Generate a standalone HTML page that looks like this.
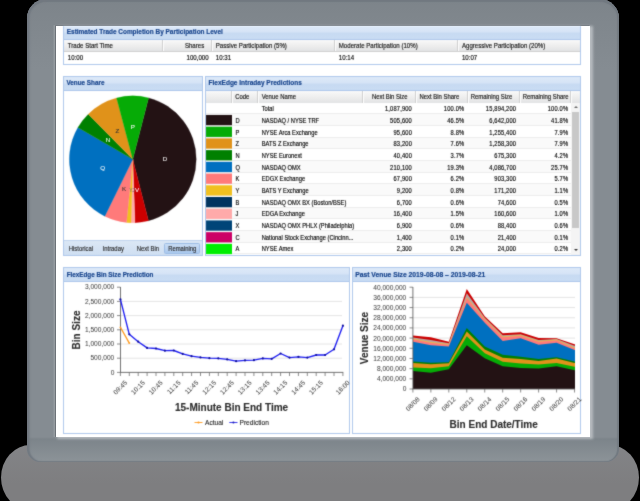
<!DOCTYPE html>
<html><head><meta charset="utf-8">
<style>
html,body{margin:0;padding:0;background:#000;}
body{width:640px;height:501px;overflow:hidden;position:relative;font-family:"Liberation Sans",sans-serif;}
#base{position:absolute;left:1px;top:444.6px;width:637.8px;height:65px;border-radius:29.5px/32.5px;background:linear-gradient(#838487,#7e7e80 60%);}
#mon{position:absolute;left:27.3px;top:-1px;width:591.6px;height:462.7px;border-radius:19.5px 19.5px 13.5px 13.5px;background:linear-gradient(#7d848a 0,#80878d 24px,#858c92 70px,#858c92 438px,#7c848a 440px,#8b9297 461px);box-shadow:inset 2.5px 0 1.6px 0 #717880,inset -1.8px 0 1px 0 #727980,inset 0 3.1px 1px 0 #727980,inset 0 -0.9px 1px 0 #798086;}
#scr{position:absolute;left:55.5px;top:26.4px;width:534.4px;height:410.5px;background:#fff;box-shadow:-0.9px -0.4px 0 0.3px #6c7278,-2px -0.4px 0.6px 0.3px #a0a6aa,1.8px 0.6px 2.4px 1.1px #b6bbbf;}
#ui{position:absolute;left:0;top:0;width:640px;height:501px;filter:url(#soft);}
.p{position:absolute;border:1px solid #b0c9ec;background:#fff;box-sizing:border-box;}
.h{position:absolute;left:0;right:0;top:0;height:13px;background:linear-gradient(#dde9f8 0,#d6e4f6 42%,#c7daf2 58%,#c9dcf3 100%);border-bottom:0.8px solid #adc7eb;box-sizing:border-box;}
.h b{position:absolute;left:4.4px;top:2.4px;font-size:6.35px;line-height:8px;color:#15428b;white-space:nowrap;letter-spacing:0;-webkit-text-stroke:0.15px #15428b}
.gh{position:absolute;left:0;right:0;height:12.6px;background:linear-gradient(#f9f9f9,#ececec 60%,#e2e3e5);border-bottom:0.8px solid #d0d0d0;box-sizing:border-box;}
.gh span{position:absolute;top:2.6px;font-size:5.95px;line-height:8px;color:#111;white-space:nowrap;-webkit-text-stroke:0.14px #222;transform:scaleY(1.16);transform-origin:50% 55%}
.gh i{position:absolute;top:0;bottom:0;width:0.8px;background:#cfcfcf;border-right:0.6px solid #fff}
.t{position:absolute;font-size:6.1px;line-height:8px;color:#000;white-space:nowrap;-webkit-text-stroke:0.14px #111;transform:scaleY(1.16);transform-origin:50% 55%}
.row{position:absolute;left:205.8px;width:365.2px;height:11.72px;border-bottom:0.6px solid #ededed;box-sizing:border-box;}
.row .sw{position:absolute;left:0.4px;top:1px;width:26px;height:9.9px;}
.row span{position:absolute;top:2.6px;font-size:5.75px;line-height:8px;color:#000;white-space:nowrap;-webkit-text-stroke:0.14px #111;transform:scaleY(1.16);transform-origin:50% 55%}
.row .n{text-align:right;letter-spacing:0.16px}
svg{position:absolute;left:0;top:0;}
svg text{font-family:"Liberation Sans",sans-serif;}
.ax{font-size:6.6px;fill:#484848;stroke:#484848;stroke-width:0.05px}
.ttl{font-size:10px;font-weight:bold;fill:#2c2c2c;stroke:#2c2c2c;stroke-width:0.12px}
.lg{font-size:6.6px;fill:#222;stroke:#222;stroke-width:0.1px}
.pl{font-size:6.2px;fill:#fff;stroke:#fff;stroke-width:0.08px}
.tb{position:absolute;font-size:5.9px;line-height:8px;color:#222;white-space:nowrap;-webkit-text-stroke:0.12px #333;transform:scaleY(1.16);transform-origin:50% 55%}
</style></head><body>
<svg width="0" height="0" style="position:absolute"><filter id="soft" x="0" y="0" width="100%" height="100%" color-interpolation-filters="sRGB"><feConvolveMatrix order="3" kernelMatrix="0.025 0.085 0.025 0.085 0.56 0.085 0.025 0.085 0.025" divisor="1" edgeMode="duplicate" preserveAlpha="false"/></filter></svg>
<div id="base"></div>
<div id="mon"></div>
<div id="scr"></div>
<div id="ui">
<!-- panel 1 -->
<div class="p" style="left:63.2px;top:26.4px;width:517.8px;height:38.8px;border-top:none">
 <div class="h" style="height:13.6px"><b style="left:2.6px;top:2.1px;font-size:6.45px">Estimated Trade Completion By Participation Level</b></div>
 <div class="gh" style="top:13.6px;height:11.6px">
  <span style="left:3.6px;top:1.8px;font-size:6.1px">Trade Start Time</span><i style="left:97.9px"></i>
  <span style="right:375.8px;top:1.8px;font-size:6.1px">Shares</span><i style="left:147px"></i>
  <span style="left:151.6px;top:1.8px;font-size:6.1px">Passive Participation (5%)</span><i style="left:269.6px"></i>
  <span style="left:274.6px;top:1.8px;font-size:6.1px">Moderate Participation (10%)</span><i style="left:392.6px"></i>
  <span style="left:397.8px;top:1.8px;font-size:6.1px">Aggressive Participation (20%)</span>
 </div>
 <span class="t" style="left:3.6px;top:27.6px">10:00</span>
 <span class="t" style="right:371.4px;top:27.6px">100,000</span>
 <span class="t" style="left:151.6px;top:27.6px">10:31</span>
 <span class="t" style="left:274.6px;top:27.6px">10:14</span>
 <span class="t" style="left:397.8px;top:27.6px">10:07</span>
</div>
<!-- venue share -->
<div class="p" style="left:63.2px;top:75.6px;width:139.4px;height:180px">
 <div class="h" style="height:14px"><b style="left:2.2px;top:2.9px">Venue Share</b></div>
 <div style="position:absolute;left:0;right:0;bottom:0;height:13.8px;background:linear-gradient(#dbe7f5,#cfdff2);border-top:0.6px solid #c0d4ee"></div>
 <div style="position:absolute;left:100.2px;top:166.2px;width:36px;height:11.4px;box-sizing:border-box;border:0.8px solid #9cbce5;border-radius:1.5px;background:linear-gradient(#c8dcf4 0,#bdd4f1 50%,#a8c8ee 100%)"></div>
 <span class="tb" style="left:4.6px;top:168.2px">Historical</span>
 <span class="tb" style="left:38.4px;top:168.2px">Intraday</span>
 <span class="tb" style="left:72.6px;top:168.2px">Next Bin</span>
 <span class="tb" style="left:104px;top:168.2px">Remaining</span>
</div>
<!-- flexedge intraday -->
<div class="p" style="left:205.4px;top:75.6px;width:375.6px;height:180px">
 <div class="h" style="height:14px"><b style="left:2.2px;top:2.9px;font-size:6.5px">FlexEdge Intraday Predictions</b></div>
 <div class="gh" style="top:14px;height:13px">
  <i style="left:24.9px"></i><span style="left:28.8px;top:2.5px">Code</span><i style="left:51px"></i>
  <span style="left:55.3px;top:2.5px">Venue Name</span><i style="left:155.8px"></i>
  <span style="left:165.5px;top:2.5px">Next Bin Size</span><i style="left:208.4px"></i>
  <span style="left:213px;top:2.5px">Next Bin Share</span><i style="left:260.8px"></i>
  <span style="left:264.3px;top:2.5px">Remaining Size</span><i style="left:312.4px"></i>
  <span style="left:316.3px;top:2.5px">Remaining Share</span><i style="left:363.8px"></i>
 </div>
</div>
<div style="position:absolute;left:205.8px;top:102.6px;width:374.2px;height:152px;overflow:hidden">
 <div style="position:absolute;left:-205.8px;top:-102.6px;width:640px;height:501px">
<div class="row" style="top:102.6px;background:#ffffff">
<span class="c" style="left:29.6px"></span><span class="c" style="left:55.9px">Total</span><span class="n" style="right:159px">1,087,900</span><span class="n" style="right:106.7px">100.0%</span><span class="n" style="right:54.8px">15,894,200</span><span class="n" style="right:2.8px">100.0%</span></div>
<div class="row" style="top:114.27px;background:#fafafa">
<span class="c" style="left:29.6px">D</span><span class="c" style="left:55.9px">NASDAQ / NYSE TRF</span><span class="n" style="right:159px">505,600</span><span class="n" style="right:106.7px">46.5%</span><span class="n" style="right:54.8px">6,642,000</span><span class="n" style="right:2.8px">41.8%</span></div>
<div class="row" style="top:125.94px;background:#ffffff">
<span class="c" style="left:29.6px">P</span><span class="c" style="left:55.9px">NYSE Arca Exchange</span><span class="n" style="right:159px">95,600</span><span class="n" style="right:106.7px">8.8%</span><span class="n" style="right:54.8px">1,255,400</span><span class="n" style="right:2.8px">7.9%</span></div>
<div class="row" style="top:137.61px;background:#fafafa">
<span class="c" style="left:29.6px">Z</span><span class="c" style="left:55.9px">BATS Z Exchange</span><span class="n" style="right:159px">83,200</span><span class="n" style="right:106.7px">7.6%</span><span class="n" style="right:54.8px">1,258,300</span><span class="n" style="right:2.8px">7.9%</span></div>
<div class="row" style="top:149.28px;background:#ffffff">
<span class="c" style="left:29.6px">N</span><span class="c" style="left:55.9px">NYSE Euronext</span><span class="n" style="right:159px">40,400</span><span class="n" style="right:106.7px">3.7%</span><span class="n" style="right:54.8px">675,300</span><span class="n" style="right:2.8px">4.2%</span></div>
<div class="row" style="top:160.95px;background:#fafafa">
<span class="c" style="left:29.6px">Q</span><span class="c" style="left:55.9px">NASDAQ OMX</span><span class="n" style="right:159px">210,100</span><span class="n" style="right:106.7px">19.3%</span><span class="n" style="right:54.8px">4,086,700</span><span class="n" style="right:2.8px">25.7%</span></div>
<div class="row" style="top:172.62px;background:#ffffff">
<span class="c" style="left:29.6px">K</span><span class="c" style="left:55.9px">EDGX Exchange</span><span class="n" style="right:159px">67,900</span><span class="n" style="right:106.7px">6.2%</span><span class="n" style="right:54.8px">903,300</span><span class="n" style="right:2.8px">5.7%</span></div>
<div class="row" style="top:184.29px;background:#fafafa">
<span class="c" style="left:29.6px">Y</span><span class="c" style="left:55.9px">BATS Y Exchange</span><span class="n" style="right:159px">9,200</span><span class="n" style="right:106.7px">0.8%</span><span class="n" style="right:54.8px">171,200</span><span class="n" style="right:2.8px">1.1%</span></div>
<div class="row" style="top:195.96px;background:#ffffff">
<span class="c" style="left:29.6px">B</span><span class="c" style="left:55.9px">NASDAQ OMX BX (Boston/BSE)</span><span class="n" style="right:159px">6,700</span><span class="n" style="right:106.7px">0.6%</span><span class="n" style="right:54.8px">74,600</span><span class="n" style="right:2.8px">0.5%</span></div>
<div class="row" style="top:207.63px;background:#fafafa">
<span class="c" style="left:29.6px">J</span><span class="c" style="left:55.9px">EDGA Exchange</span><span class="n" style="right:159px">16,400</span><span class="n" style="right:106.7px">1.5%</span><span class="n" style="right:54.8px">160,600</span><span class="n" style="right:2.8px">1.0%</span></div>
<div class="row" style="top:219.3px;background:#ffffff">
<span class="c" style="left:29.6px">X</span><span class="c" style="left:55.9px">NASDAQ OMX PHLX (Philadelphia)</span><span class="n" style="right:159px">6,900</span><span class="n" style="right:106.7px">0.6%</span><span class="n" style="right:54.8px">88,400</span><span class="n" style="right:2.8px">0.6%</span></div>
<div class="row" style="top:230.97px;background:#fafafa">
<span class="c" style="left:29.6px">C</span><span class="c" style="left:55.9px">National Stock Exchange (Cincinn...</span><span class="n" style="right:159px">1,400</span><span class="n" style="right:106.7px">0.1%</span><span class="n" style="right:54.8px">21,400</span><span class="n" style="right:2.8px">0.1%</span></div>
<div class="row" style="top:242.64px;background:#ffffff">
<span class="c" style="left:29.6px">A</span><span class="c" style="left:55.9px">NYSE Amex</span><span class="n" style="right:159px">2,300</span><span class="n" style="right:106.7px">0.2%</span><span class="n" style="right:54.8px">24,000</span><span class="n" style="right:2.8px">0.2%</span></div>
 </div>
 <!-- scrollbar -->
 <div style="position:absolute;left:365.2px;top:0;width:9px;height:152.6px;background:#f4f4f4"></div>
 <div style="position:absolute;left:366.2px;top:9.8px;width:7.4px;height:115.8px;background:#c8c8c8"></div>
 <div style="position:absolute;left:367.8px;top:3.6px;width:0;height:0;border-left:2px solid transparent;border-right:2px solid transparent;border-bottom:2.4px solid #666"></div>
 <div style="position:absolute;left:367.8px;top:146.2px;width:0;height:0;border-left:2px solid transparent;border-right:2px solid transparent;border-top:2.4px solid #333"></div>
</div>
<!-- bottom panels -->
<div class="p" style="left:63.2px;top:267.3px;width:286.4px;height:167.2px">
 <div class="h" style="height:13.7px"><b style="left:2.5px;top:2.8px;font-size:6.3px">FlexEdge Bin Size Prediction</b></div>
</div>
<div class="p" style="left:352.4px;top:267.3px;width:228.6px;height:167.2px">
 <div class="h" style="height:13.7px"><b style="left:1.8px;top:2.8px;font-size:6.78px">Past Venue Size 2019-08-08 – 2019-08-21</b></div>
</div>
<svg width="640" height="501" viewBox="0 0 640 501">
<path d="M132.8 159.3L148.57 97.89A63.4 63.4 0 0 1 148.46 220.74Z" fill="#231214" stroke="#231214" stroke-width="0.3"/>
<path d="M132.8 159.3L148.46 220.74A63.4 63.4 0 0 1 135.01 222.66Z" fill="#cc0000" stroke="#cc0000" stroke-width="0.3"/>
<path d="M132.8 159.3L135.01 222.66A63.4 63.4 0 0 1 131.03 222.68Z" fill="#ffaaaa" stroke="#ffaaaa" stroke-width="0.3"/>
<path d="M132.8 159.3L131.03 222.68A63.4 63.4 0 0 1 126.5 222.39Z" fill="#f0c020" stroke="#f0c020" stroke-width="0.3"/>
<path d="M132.8 159.3L126.5 222.39A63.4 63.4 0 0 1 104.81 216.19Z" fill="#ff7a7a" stroke="#ff7a7a" stroke-width="0.3"/>
<path d="M132.8 159.3L104.81 216.19A63.4 63.4 0 0 1 77.95 127.5Z" fill="#0070c0" stroke="#0070c0" stroke-width="0.3"/>
<path d="M132.8 159.3L77.95 127.5A63.4 63.4 0 0 1 88.28 114.16Z" fill="#008000" stroke="#008000" stroke-width="0.3"/>
<path d="M132.8 159.3L88.28 114.16A63.4 63.4 0 0 1 116.6 98Z" fill="#e0921a" stroke="#e0921a" stroke-width="0.3"/>
<path d="M132.8 159.3L116.6 98A63.4 63.4 0 0 1 148.57 97.89Z" fill="#06ab06" stroke="#06ab06" stroke-width="0.3"/>
<rect x="206.05" y="114.95" width="25.95" height="10.25" fill="#231214"/>
<rect x="206.05" y="126.67" width="25.95" height="10.25" fill="#06ab06"/>
<rect x="206.05" y="138.39" width="25.95" height="10.25" fill="#e0921a"/>
<rect x="206.05" y="150.11" width="25.95" height="10.25" fill="#008000"/>
<rect x="206.05" y="161.83" width="25.95" height="10.25" fill="#0070c0"/>
<rect x="206.05" y="173.55" width="25.95" height="10.25" fill="#ff7a7a"/>
<rect x="206.05" y="185.27" width="25.95" height="10.25" fill="#f0c020"/>
<rect x="206.05" y="196.99" width="25.95" height="10.25" fill="#003460"/>
<rect x="206.05" y="208.71" width="25.95" height="10.25" fill="#ffaaaa"/>
<rect x="206.05" y="220.43" width="25.95" height="10.25" fill="#004578"/>
<rect x="206.05" y="232.15" width="25.95" height="10.25" fill="#cc0066"/>
<rect x="206.05" y="243.87" width="25.95" height="10.25" fill="#00ee00"/>
<text x="165.0" y="161.0" text-anchor="middle" class="pl">D</text>
<text x="132.7" y="129.2" text-anchor="middle" class="pl">P</text>
<text x="117.5" y="133.2" text-anchor="middle" class="pl" style="fill:#333;stroke:#333">Z</text>
<text x="108.0" y="141.6" text-anchor="middle" class="pl">N</text>
<text x="102.6" y="170.2" text-anchor="middle" class="pl">Q</text>
<text x="124.0" y="191.4" text-anchor="middle" class="pl" style="fill:#333;stroke:#333">K</text>
<text x="131.0" y="192.4" text-anchor="middle" class="pl" style="fill:#666;stroke:none;font-size:5px">Y</text>
<text x="133.6" y="192.4" text-anchor="middle" class="pl" style="fill:#666;stroke:none;font-size:5px">J</text>
<text x="137.0" y="192.4" text-anchor="middle" class="pl">V</text>
<line x1="120.5" x2="342" y1="301.4" y2="301.4" stroke="#d6d6d6" stroke-width="0.65"/>
<line x1="120.5" x2="342" y1="315.6" y2="315.6" stroke="#d6d6d6" stroke-width="0.65"/>
<line x1="120.5" x2="342" y1="329.8" y2="329.8" stroke="#d6d6d6" stroke-width="0.65"/>
<line x1="120.5" x2="342" y1="344" y2="344" stroke="#d6d6d6" stroke-width="0.65"/>
<line x1="120.5" x2="342" y1="358.2" y2="358.2" stroke="#d6d6d6" stroke-width="0.65"/>
<line x1="120.5" x2="120.5" y1="287" y2="372.4" stroke="#626262" stroke-width="0.9"/>
<line x1="120" x2="343.3" y1="372.4" y2="372.4" stroke="#626262" stroke-width="0.9"/>
<line x1="117" x2="120.5" y1="287.2" y2="287.2" stroke="#666" stroke-width="0.75"/>
<line x1="117" x2="120.5" y1="301.4" y2="301.4" stroke="#666" stroke-width="0.75"/>
<line x1="117" x2="120.5" y1="315.6" y2="315.6" stroke="#666" stroke-width="0.75"/>
<line x1="117" x2="120.5" y1="329.8" y2="329.8" stroke="#666" stroke-width="0.75"/>
<line x1="117" x2="120.5" y1="344" y2="344" stroke="#666" stroke-width="0.75"/>
<line x1="117" x2="120.5" y1="358.2" y2="358.2" stroke="#666" stroke-width="0.75"/>
<line x1="117" x2="120.5" y1="372.4" y2="372.4" stroke="#666" stroke-width="0.75"/>
<line x1="120.4" x2="120.4" y1="372.4" y2="376" stroke="#666" stroke-width="0.75"/>
<line x1="129.3" x2="129.3" y1="372.4" y2="376" stroke="#666" stroke-width="0.75"/>
<line x1="138.2" x2="138.2" y1="372.4" y2="376" stroke="#666" stroke-width="0.75"/>
<line x1="147.1" x2="147.1" y1="372.4" y2="376" stroke="#666" stroke-width="0.75"/>
<line x1="156" x2="156" y1="372.4" y2="376" stroke="#666" stroke-width="0.75"/>
<line x1="164.9" x2="164.9" y1="372.4" y2="376" stroke="#666" stroke-width="0.75"/>
<line x1="173.8" x2="173.8" y1="372.4" y2="376" stroke="#666" stroke-width="0.75"/>
<line x1="182.7" x2="182.7" y1="372.4" y2="376" stroke="#666" stroke-width="0.75"/>
<line x1="191.6" x2="191.6" y1="372.4" y2="376" stroke="#666" stroke-width="0.75"/>
<line x1="200.5" x2="200.5" y1="372.4" y2="376" stroke="#666" stroke-width="0.75"/>
<line x1="209.4" x2="209.4" y1="372.4" y2="376" stroke="#666" stroke-width="0.75"/>
<line x1="218.3" x2="218.3" y1="372.4" y2="376" stroke="#666" stroke-width="0.75"/>
<line x1="227.2" x2="227.2" y1="372.4" y2="376" stroke="#666" stroke-width="0.75"/>
<line x1="236.1" x2="236.1" y1="372.4" y2="376" stroke="#666" stroke-width="0.75"/>
<line x1="245" x2="245" y1="372.4" y2="376" stroke="#666" stroke-width="0.75"/>
<line x1="253.9" x2="253.9" y1="372.4" y2="376" stroke="#666" stroke-width="0.75"/>
<line x1="262.8" x2="262.8" y1="372.4" y2="376" stroke="#666" stroke-width="0.75"/>
<line x1="271.7" x2="271.7" y1="372.4" y2="376" stroke="#666" stroke-width="0.75"/>
<line x1="280.6" x2="280.6" y1="372.4" y2="376" stroke="#666" stroke-width="0.75"/>
<line x1="289.5" x2="289.5" y1="372.4" y2="376" stroke="#666" stroke-width="0.75"/>
<line x1="298.4" x2="298.4" y1="372.4" y2="376" stroke="#666" stroke-width="0.75"/>
<line x1="307.3" x2="307.3" y1="372.4" y2="376" stroke="#666" stroke-width="0.75"/>
<line x1="316.2" x2="316.2" y1="372.4" y2="376" stroke="#666" stroke-width="0.75"/>
<line x1="325.1" x2="325.1" y1="372.4" y2="376" stroke="#666" stroke-width="0.75"/>
<line x1="334" x2="334" y1="372.4" y2="376" stroke="#666" stroke-width="0.75"/>
<line x1="342.9" x2="342.9" y1="372.4" y2="376" stroke="#666" stroke-width="0.75"/>
<polyline points="120.4,327.3 129.3,343.1" fill="none" stroke="#ff9a1e" stroke-width="1.3"/>
<polyline points="120.4,299.4 129.3,334.3 138.2,341.7 147.1,347.9 156,348.5 164.9,350.7 173.8,350.5 182.7,353.9 191.6,356.2 200.5,357.4 209.4,358.2 218.3,358.4 227.2,359.4 236.1,361.2 245,360.4 253.9,360.2 262.8,358.4 271.7,358.8 280.6,353.5 289.5,357.6 298.4,356.8 307.3,357.6 316.2,355 325.1,355 334,349.3 342.9,325.7" fill="none" stroke="#1c1cf2" stroke-width="1.35" stroke-linejoin="round"/>
<circle cx="120.4" cy="299.4" r="1.1" fill="#0c0c9c"/>
<circle cx="129.3" cy="334.3" r="1.1" fill="#0c0c9c"/>
<circle cx="138.2" cy="341.7" r="1.1" fill="#0c0c9c"/>
<circle cx="147.1" cy="347.9" r="1.1" fill="#0c0c9c"/>
<circle cx="156" cy="348.5" r="1.1" fill="#0c0c9c"/>
<circle cx="164.9" cy="350.7" r="1.1" fill="#0c0c9c"/>
<circle cx="173.8" cy="350.5" r="1.1" fill="#0c0c9c"/>
<circle cx="182.7" cy="353.9" r="1.1" fill="#0c0c9c"/>
<circle cx="191.6" cy="356.2" r="1.1" fill="#0c0c9c"/>
<circle cx="200.5" cy="357.4" r="1.1" fill="#0c0c9c"/>
<circle cx="209.4" cy="358.2" r="1.1" fill="#0c0c9c"/>
<circle cx="218.3" cy="358.4" r="1.1" fill="#0c0c9c"/>
<circle cx="227.2" cy="359.4" r="1.1" fill="#0c0c9c"/>
<circle cx="236.1" cy="361.2" r="1.1" fill="#0c0c9c"/>
<circle cx="245" cy="360.4" r="1.1" fill="#0c0c9c"/>
<circle cx="253.9" cy="360.2" r="1.1" fill="#0c0c9c"/>
<circle cx="262.8" cy="358.4" r="1.1" fill="#0c0c9c"/>
<circle cx="271.7" cy="358.8" r="1.1" fill="#0c0c9c"/>
<circle cx="280.6" cy="353.5" r="1.1" fill="#0c0c9c"/>
<circle cx="289.5" cy="357.6" r="1.1" fill="#0c0c9c"/>
<circle cx="298.4" cy="356.8" r="1.1" fill="#0c0c9c"/>
<circle cx="307.3" cy="357.6" r="1.1" fill="#0c0c9c"/>
<circle cx="316.2" cy="355" r="1.1" fill="#0c0c9c"/>
<circle cx="325.1" cy="355" r="1.1" fill="#0c0c9c"/>
<circle cx="334" cy="349.3" r="1.1" fill="#0c0c9c"/>
<circle cx="342.9" cy="325.7" r="1.1" fill="#0c0c9c"/>
<circle cx="120.4" cy="327.3" r="0.9" fill="#ff9a1e"/>
<circle cx="129.3" cy="343.1" r="0.9" fill="#ff9a1e"/>
<text x="114.3" y="289.35" text-anchor="end" class="ax">3,000,000</text>
<text x="114.3" y="303.55" text-anchor="end" class="ax">2,500,000</text>
<text x="114.3" y="317.75" text-anchor="end" class="ax">2,000,000</text>
<text x="114.3" y="331.95" text-anchor="end" class="ax">1,500,000</text>
<text x="114.3" y="346.15" text-anchor="end" class="ax">1,000,000</text>
<text x="114.3" y="360.35" text-anchor="end" class="ax">500,000</text>
<text x="114.3" y="374.55" text-anchor="end" class="ax">0</text>
<text transform="translate(125.9,381.5) rotate(-45)" text-anchor="end" class="ax" y="2.4">09:45</text>
<text transform="translate(143.7,381.5) rotate(-45)" text-anchor="end" class="ax" y="2.4">10:15</text>
<text transform="translate(161.5,381.5) rotate(-45)" text-anchor="end" class="ax" y="2.4">10:45</text>
<text transform="translate(179.3,381.5) rotate(-45)" text-anchor="end" class="ax" y="2.4">11:15</text>
<text transform="translate(197.1,381.5) rotate(-45)" text-anchor="end" class="ax" y="2.4">11:45</text>
<text transform="translate(214.9,381.5) rotate(-45)" text-anchor="end" class="ax" y="2.4">12:15</text>
<text transform="translate(232.7,381.5) rotate(-45)" text-anchor="end" class="ax" y="2.4">12:45</text>
<text transform="translate(250.5,381.5) rotate(-45)" text-anchor="end" class="ax" y="2.4">13:15</text>
<text transform="translate(268.3,381.5) rotate(-45)" text-anchor="end" class="ax" y="2.4">13:45</text>
<text transform="translate(286.1,381.5) rotate(-45)" text-anchor="end" class="ax" y="2.4">14:15</text>
<text transform="translate(303.9,381.5) rotate(-45)" text-anchor="end" class="ax" y="2.4">14:45</text>
<text transform="translate(321.7,381.5) rotate(-45)" text-anchor="end" class="ax" y="2.4">15:15</text>
<text transform="translate(348.4,381.5) rotate(-45)" text-anchor="end" class="ax" y="2.4">16:00</text>
<text x="231.6" y="411" text-anchor="middle" class="ttl">15-Minute Bin End Time</text>
<text transform="translate(79.7,330) rotate(-90)" text-anchor="middle" class="ttl">Bin Size</text>
<line x1="194.5" x2="202.5" y1="422.5" y2="422.5" stroke="#ff9a1e" stroke-width="0.9"/><circle cx="198.5" cy="422.5" r="1.1" fill="#ff9a1e"/>
<text x="205" y="424.8" class="lg">Actual</text>
<line x1="229.3" x2="237.5" y1="422.5" y2="422.5" stroke="#2222ee" stroke-width="0.9"/><circle cx="233.4" cy="422.5" r="1.1" fill="#1a1ab8"/>
<text x="239.5" y="424.8" class="lg">Prediction</text>
<clipPath id="ac"><rect x="413" y="280" width="162" height="109"/></clipPath>
<line x1="413" x2="575" y1="297.38" y2="297.38" stroke="#d6d6d6" stroke-width="0.65"/>
<line x1="413" x2="575" y1="307.56" y2="307.56" stroke="#d6d6d6" stroke-width="0.65"/>
<line x1="413" x2="575" y1="317.74" y2="317.74" stroke="#d6d6d6" stroke-width="0.65"/>
<line x1="413" x2="575" y1="327.92" y2="327.92" stroke="#d6d6d6" stroke-width="0.65"/>
<line x1="413" x2="575" y1="338.1" y2="338.1" stroke="#d6d6d6" stroke-width="0.65"/>
<line x1="413" x2="575" y1="348.28" y2="348.28" stroke="#d6d6d6" stroke-width="0.65"/>
<line x1="413" x2="575" y1="358.46" y2="358.46" stroke="#d6d6d6" stroke-width="0.65"/>
<line x1="413" x2="575" y1="368.64" y2="368.64" stroke="#d6d6d6" stroke-width="0.65"/>
<line x1="413" x2="575" y1="378.82" y2="378.82" stroke="#d6d6d6" stroke-width="0.65"/>
<path d="M412.9 389L412.9 335.57L430.86 337.25L448.82 341.8L466.78 289.1L484.74 316.17L502.7 333.17L520.66 332.22L538.62 337.96L556.58 338.2L574.54 344.19L577 344.19L577 389Z" fill="#cc0000" clip-path="url(#ac)"/>
<path d="M412.9 389L412.9 337.49L430.86 339.88L448.82 343.23L466.78 293.17L484.74 317.84L502.7 335.33L520.66 334.37L538.62 339.88L556.58 339.11L574.54 345.87L577 345.87L577 389Z" fill="#b9a4a4" clip-path="url(#ac)"/>
<path d="M412.9 389L412.9 338.4L430.86 341.99L448.82 343.9L466.78 297.2L484.74 318.75L502.7 336.48L520.66 335.04L538.62 341.03L556.58 339.59L574.54 347.5L577 347.5L577 389Z" fill="#e8c040" clip-path="url(#ac)"/>
<path d="M412.9 389L412.9 339.16L430.86 342.75L448.82 344.67L466.78 297.96L484.74 319.52L502.7 337.25L520.66 335.81L538.62 341.8L556.58 340.36L574.54 348.26L577 348.26L577 389Z" fill="#ff7a7a" clip-path="url(#ac)"/>
<path d="M412.9 389L412.9 341.8L430.86 345.15L448.82 346.59L466.78 302.75L484.74 322.63L502.7 341.08L520.66 338.2L538.62 344.67L556.58 342.75L574.54 349.94L577 349.94L577 389Z" fill="#0070c0" clip-path="url(#ac)"/>
<path d="M412.9 389L412.9 361.44L430.86 362.63L448.82 362.16L466.78 327.9L484.74 346.59L502.7 354.73L520.66 356.65L538.62 359.04L556.58 357.13L574.54 361.44L577 361.44L577 389Z" fill="#008000" clip-path="url(#ac)"/>
<path d="M412.9 389L412.9 363.11L430.86 364.31L448.82 363.35L466.78 331.5L484.74 349.46L502.7 357.84L520.66 359.04L538.62 360.96L556.58 358.56L574.54 363.11L577 363.11L577 389Z" fill="#e0921a" clip-path="url(#ac)"/>
<path d="M412.9 389L412.9 367.43L430.86 368.14L448.82 366.23L466.78 336.29L484.74 353.29L502.7 361.68L520.66 363.59L538.62 364.55L556.58 363.11L574.54 366.71L577 366.71L577 389Z" fill="#06ab06" clip-path="url(#ac)"/>
<path d="M412.9 389L412.9 371.02L430.86 372.69L448.82 369.34L466.78 345.15L484.74 358.32L502.7 366.23L520.66 367.9L538.62 368.62L556.58 366.23L574.54 370.3L577 370.3L577 389Z" fill="#231214" clip-path="url(#ac)"/>
<line x1="412.9" x2="412.9" y1="287" y2="389" stroke="#626262" stroke-width="0.9"/>
<line x1="412.4" x2="575" y1="389" y2="389" stroke="#626262" stroke-width="0.9"/>
<line x1="409.5" x2="412.9" y1="287.2" y2="287.2" stroke="#666" stroke-width="0.75"/>
<line x1="409.5" x2="412.9" y1="297.38" y2="297.38" stroke="#666" stroke-width="0.75"/>
<line x1="409.5" x2="412.9" y1="307.56" y2="307.56" stroke="#666" stroke-width="0.75"/>
<line x1="409.5" x2="412.9" y1="317.74" y2="317.74" stroke="#666" stroke-width="0.75"/>
<line x1="409.5" x2="412.9" y1="327.92" y2="327.92" stroke="#666" stroke-width="0.75"/>
<line x1="409.5" x2="412.9" y1="338.1" y2="338.1" stroke="#666" stroke-width="0.75"/>
<line x1="409.5" x2="412.9" y1="348.28" y2="348.28" stroke="#666" stroke-width="0.75"/>
<line x1="409.5" x2="412.9" y1="358.46" y2="358.46" stroke="#666" stroke-width="0.75"/>
<line x1="409.5" x2="412.9" y1="368.64" y2="368.64" stroke="#666" stroke-width="0.75"/>
<line x1="409.5" x2="412.9" y1="378.82" y2="378.82" stroke="#666" stroke-width="0.75"/>
<line x1="409.5" x2="412.9" y1="389" y2="389" stroke="#666" stroke-width="0.75"/>
<line x1="412.9" x2="412.9" y1="389" y2="392.5" stroke="#666" stroke-width="0.75"/>
<line x1="430.86" x2="430.86" y1="389" y2="392.5" stroke="#666" stroke-width="0.75"/>
<line x1="448.82" x2="448.82" y1="389" y2="392.5" stroke="#666" stroke-width="0.75"/>
<line x1="466.78" x2="466.78" y1="389" y2="392.5" stroke="#666" stroke-width="0.75"/>
<line x1="484.74" x2="484.74" y1="389" y2="392.5" stroke="#666" stroke-width="0.75"/>
<line x1="502.7" x2="502.7" y1="389" y2="392.5" stroke="#666" stroke-width="0.75"/>
<line x1="520.66" x2="520.66" y1="389" y2="392.5" stroke="#666" stroke-width="0.75"/>
<line x1="538.62" x2="538.62" y1="389" y2="392.5" stroke="#666" stroke-width="0.75"/>
<line x1="556.58" x2="556.58" y1="389" y2="392.5" stroke="#666" stroke-width="0.75"/>
<line x1="574.54" x2="574.54" y1="389" y2="392.5" stroke="#666" stroke-width="0.75"/>
<text x="406.3" y="289.6" text-anchor="end" class="ax">40,000,000</text>
<text x="406.3" y="299.78" text-anchor="end" class="ax">36,000,000</text>
<text x="406.3" y="309.96" text-anchor="end" class="ax">32,000,000</text>
<text x="406.3" y="320.14" text-anchor="end" class="ax">28,000,000</text>
<text x="406.3" y="330.32" text-anchor="end" class="ax">24,000,000</text>
<text x="406.3" y="340.5" text-anchor="end" class="ax">20,000,000</text>
<text x="406.3" y="350.68" text-anchor="end" class="ax">16,000,000</text>
<text x="406.3" y="360.86" text-anchor="end" class="ax">12,000,000</text>
<text x="406.3" y="371.04" text-anchor="end" class="ax">8,000,000</text>
<text x="406.3" y="381.22" text-anchor="end" class="ax">4,000,000</text>
<text x="406.3" y="391.4" text-anchor="end" class="ax">0</text>
<text transform="translate(418.4,398) rotate(-45)" text-anchor="end" class="ax" y="2.4">08/08</text>
<text transform="translate(436.36,398) rotate(-45)" text-anchor="end" class="ax" y="2.4">08/09</text>
<text transform="translate(454.32,398) rotate(-45)" text-anchor="end" class="ax" y="2.4">08/12</text>
<text transform="translate(472.28,398) rotate(-45)" text-anchor="end" class="ax" y="2.4">08/13</text>
<text transform="translate(490.24,398) rotate(-45)" text-anchor="end" class="ax" y="2.4">08/14</text>
<text transform="translate(508.2,398) rotate(-45)" text-anchor="end" class="ax" y="2.4">08/15</text>
<text transform="translate(526.16,398) rotate(-45)" text-anchor="end" class="ax" y="2.4">08/16</text>
<text transform="translate(544.12,398) rotate(-45)" text-anchor="end" class="ax" y="2.4">08/19</text>
<text transform="translate(562.08,398) rotate(-45)" text-anchor="end" class="ax" y="2.4">08/20</text>
<text transform="translate(580.04,398) rotate(-45)" text-anchor="end" class="ax" y="2.4">08/21</text>
<text x="493.7" y="427.5" text-anchor="middle" class="ttl">Bin End Date/Time</text>
<text transform="translate(368,338) rotate(-90)" text-anchor="middle" class="ttl">Venue Size</text>
</svg>
</div>
</body></html>
